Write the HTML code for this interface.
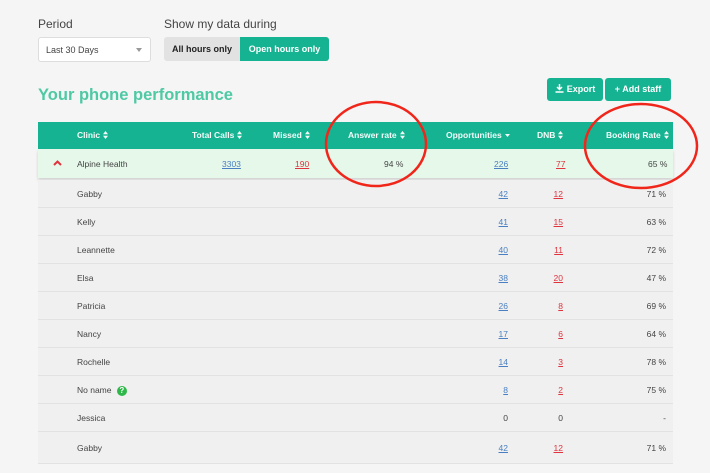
<!DOCTYPE html>
<html><head><style>
*{margin:0;padding:0;box-sizing:border-box}
body{width:710px;height:473px;background:#f5f5f5;font-family:"Liberation Sans",sans-serif;color:#444;position:relative;overflow:hidden}
.a{position:absolute;white-space:nowrap}
.lbl{font-size:12px;color:#444}
.sel{left:38px;top:37px;width:113px;height:25px;background:#fff;border:1px solid #ddd;border-radius:3px;font-size:9px;padding:7px 0 0 7px;color:#444}
.sel:after{content:"";position:absolute;right:8px;top:10px;border:3px solid transparent;border-top:4px solid #999}
.tog{left:164px;top:37px;width:165px;height:24px;border-radius:3px;overflow:hidden;font-size:9px;font-weight:bold;display:flex}
.tog div{height:24px;line-height:24px;text-align:center}
h1{left:38px;top:86px;font-size:16.5px;color:#4ec9a4;font-weight:bold}
.btn{top:78px;height:23px;background:#15b391;color:#fff;border-radius:3px;font-size:9px;font-weight:bold;line-height:23px;text-align:center}
.hdr{left:38px;top:122px;width:635px;height:27px;background:#15b391}
.h{top:130px;color:#fff;font-size:8.5px;font-weight:bold;opacity:.95}
.s{display:inline-block;width:5px;height:8px;margin-left:3px;vertical-align:-1px}
.row{left:38px;width:635px;background:#f0f0f0;border-bottom:1px solid #e2e2e2}
.t{font-size:8.5px;color:#444}
.r{text-align:right}
.bl{color:#4a7fc1;text-decoration:underline}
.rd{color:#e0333e;text-decoration:underline}
</style></head><body>
<div class="a lbl" style="left:38px;top:17px">Period</div>
<div class="a lbl" style="left:164px;top:17px">Show my data during</div>
<div class="a sel">Last 30 Days</div>
<div class="a tog"><div style="width:76px;background:#e2e2e2;color:#222">All hours only</div><div style="width:89px;background:#15b391;color:#fff">Open hours only</div></div>
<h1 class="a">Your phone performance</h1>
<div class="a btn" style="left:547px;width:56px"><svg width="9" height="9" viewBox="0 0 9 9" style="vertical-align:-1px;margin-right:3px"><path d="M4.5 0v5M2 3l2.5 2.5L7 3M0.5 8h8" stroke="#fff" stroke-width="1.5" fill="none"/></svg>Export</div>
<div class="a btn" style="left:605px;width:66px">+ Add staff</div>

<div class="a hdr"></div>
<div class="a h" style="left:77px">Clinic<svg class="s" viewBox="0 0 5 8"><path d="M0 3.3L2.5 0 5 3.3zM0 4.7L2.5 8 5 4.7z" fill="#fff"/></svg></div>
<div class="a h" style="left:192px">Total Calls<svg class="s" viewBox="0 0 5 8"><path d="M0 3.3L2.5 0 5 3.3zM0 4.7L2.5 8 5 4.7z" fill="#fff"/></svg></div>
<div class="a h" style="left:273px">Missed<svg class="s" viewBox="0 0 5 8"><path d="M0 3.3L2.5 0 5 3.3zM0 4.7L2.5 8 5 4.7z" fill="#fff"/></svg></div>
<div class="a h" style="left:348px">Answer rate<svg class="s" viewBox="0 0 5 8"><path d="M0 3.3L2.5 0 5 3.3zM0 4.7L2.5 8 5 4.7z" fill="#fff"/></svg></div>
<div class="a h" style="left:446px">Opportunities<svg class="s" viewBox="0 0 5 8"><path d="M0 3L2.5 6 5 3z" fill="#fff"/></svg></div>
<div class="a h" style="left:537px">DNB<svg class="s" viewBox="0 0 5 8"><path d="M0 3.3L2.5 0 5 3.3zM0 4.7L2.5 8 5 4.7z" fill="#fff"/></svg></div>
<div class="a h" style="left:606px">Booking Rate<svg class="s" viewBox="0 0 5 8"><path d="M0 3.3L2.5 0 5 3.3zM0 4.7L2.5 8 5 4.7z" fill="#fff"/></svg></div>

<div class="a" style="left:38px;top:149px;width:635px;height:29px;background:#e6f8ea;box-shadow:0 2px 3px rgba(0,0,0,.15)"></div>
<svg class="a" style="left:53px;top:160px" width="9" height="6" viewBox="0 0 9 6"><path d="M1 5L4.5 1.5 8 5" stroke="#e0333e" stroke-width="2" fill="none"/></svg>
<div class="a t" style="left:77px;top:159px">Alpine Health</div>
<div class="a t bl" style="left:222px;top:159px">3303</div>
<div class="a t rd" style="left:295px;top:159px">190</div>
<div class="a t" style="left:384px;top:159px">94 %</div>
<div class="a t bl" style="left:494px;top:159px">226</div>
<div class="a t rd" style="left:556px;top:159px">77</div>
<div class="a t" style="left:648px;top:159px">65 %</div>

<div id="rows"></div>
<script>
var d=[["Gabby","42","12","71 %"],["Kelly","41","15","63 %"],["Leannette","40","11","72 %"],["Elsa","38","20","47 %"],["Patricia","26","8","69 %"],["Nancy","17","6","64 %"],["Rochelle","14","3","78 %"],["No name","8","2","75 %"],["Jessica","0","0","-"],["Gabby","42","12","71 %"]];
var h="",y=180;
d.forEach(function(r,i){var hh=i==9?32:28;
h+='<div class="a row" style="top:'+y+'px;height:'+hh+'px"></div>';
var ty=y+hh/2-5;
h+='<div class="a t" style="left:77px;top:'+ty+'px">'+r[0]+(r[0]=="No name"?' <span style="display:inline-block;width:10px;height:10px;border-radius:50%;background:#2fb84a;color:#fff;font-size:8px;text-align:center;line-height:10px;font-weight:bold;margin-left:3px">?</span>':'')+'</div>';
var c=r[1]=="0";
h+='<div class="a t r '+(c?'':'bl')+'" style="right:202px;top:'+ty+'px">'+r[1]+'</div>';
h+='<div class="a t r '+(c?'':'rd')+'" style="right:147px;top:'+ty+'px">'+r[2]+'</div>';
h+='<div class="a t r" style="right:44px;top:'+ty+'px">'+r[3]+'</div>';
y+=hh;});
document.getElementById("rows").innerHTML=h;
</script>
<svg class="a" style="left:0;top:0" width="710" height="473">
<ellipse cx="376" cy="144" rx="50" ry="42" fill="none" stroke="#f0261b" stroke-width="2.5"/>
<ellipse cx="641" cy="146" rx="56" ry="42" fill="none" stroke="#f0261b" stroke-width="2.5"/>
</svg>
</body></html>
